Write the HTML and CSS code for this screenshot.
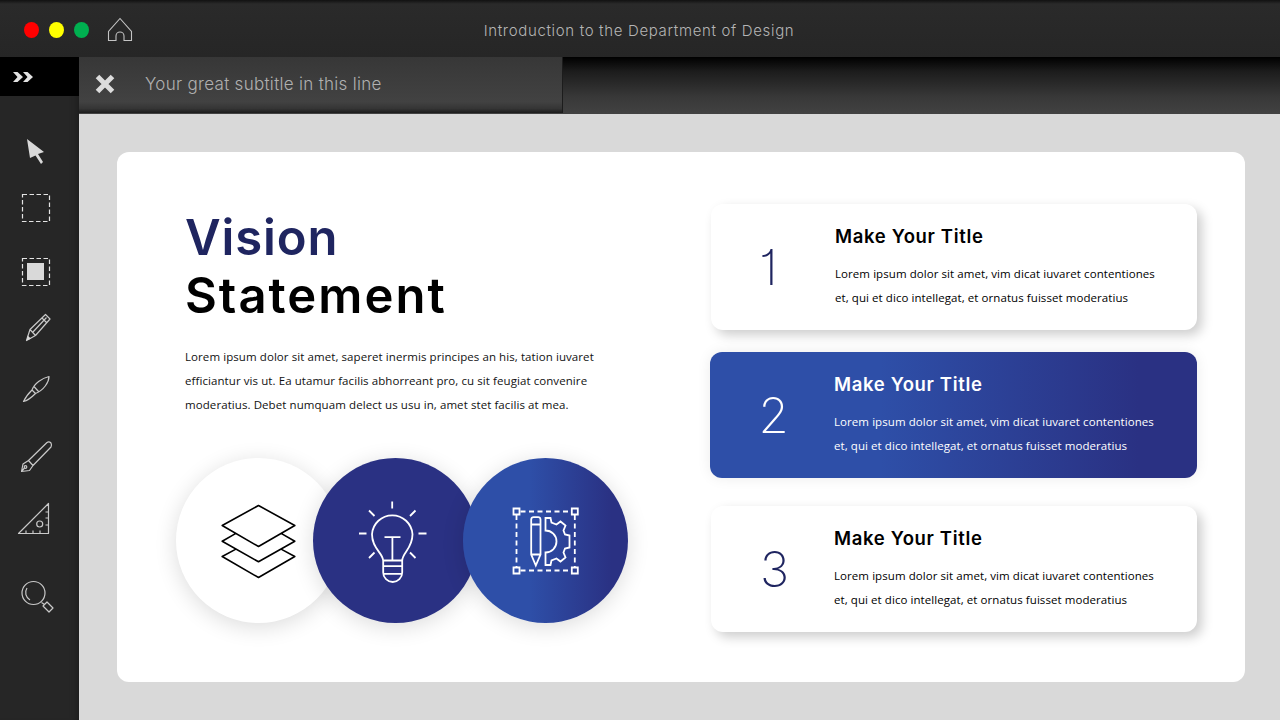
FILE: index.html
```html
<!DOCTYPE html>
<html lang="en">
<head>
<meta charset="utf-8">
<title>Vision Statement</title>
<link rel="stylesheet" href="styles.css">
</head>
<body>
<header class="topbar">
  <div class="window-controls">
    <span class="dot dot-red"></span>
    <span class="dot dot-yellow"></span>
    <span class="dot dot-green"></span>
    <svg class="home" viewBox="106 16 28 27"><path d="M108.500 40.500V31.500L120 18.500L131.500 31.500V40.500H124V36A4 4 0 0 0 116 36V40.500Z"/></svg>
  </div>
  <div class="doc-title">Introduction to the Department of Design</div>
</header>
<div class="workspace">
  <aside class="sidebar">
    <div class="expand">
      <svg class="chevrons" viewBox="0 0 20 10"><path d="M0 0H4.500L10 5L4.500 10H0L4.500 5Z"/><path d="M10 0H14.500L20 5L14.500 10H10L14.500 5Z"/></svg>
    </div>
    <div class="tools">
      <svg class="tool tool-arrow" viewBox="16 134 40 34"><polygon class="solid" points="27,139 44,152 38,154 43,162 41,164 35.500,155.500 30,158"/></svg>
      <svg class="tool tool-select" viewBox="16 190 40 36"><rect class="dash" x="22.500" y="194.500" width="27" height="27"/></svg>
      <svg class="tool tool-fill" viewBox="16 254 40 36"><rect class="dash" x="22.500" y="258.500" width="27" height="27"/><rect class="solid" x="27" y="263" width="17" height="17"/></svg>
      <svg class="tool tool-pencil" viewBox="16 310 40 36"><path class="line" d="M26.500 340.500L30 329.500L45.500 314.500L50 319L35.500 335.500ZM30 329.500L35.500 335.500M42 318L47 323M32.500 332.500L46.500 317.500"/><path class="solid" d="M26.500 340.500L27.700 335.500L31 338.800Z"/></svg>
      <svg class="tool tool-brush" viewBox="16 372 40 34"><path class="line" d="M23.500 401.500C26 396 30 392 32 390L35.500 393.500C32 397 28 400.500 23.500 401.500ZM32 390C34 384 42 378 49 376.500C49 382 44 390 35.500 393.500M33.500 386L38.500 391.500"/></svg>
      <svg class="tool tool-pen" viewBox="16 438 40 38"><path class="line" d="M47 442.500Q49 441 51 443Q52 445 51 447L33 465.500L28.500 460.500ZM21.500 471.500L23 464L28.500 460.500L33 465.500L29.500 470.500ZM21.500 471.500L24.500 468"/><circle class="line" cx="25.500" cy="467" r="1.300"/></svg>
      <svg class="tool tool-triangle" viewBox="16 499 40 38"><path class="line" d="M18.500 533.500L48.500 503.500V533.500ZM48.500 512H45.500M48.500 518H45.500M48.500 525H45.500M26 533.500V530.500M33 533.500V530.500M40 533.500V530.500"/><circle class="line" cx="39.700" cy="524" r="3"/></svg>
      <svg class="tool tool-search" viewBox="16 578 40 38"><circle class="line" cx="33.500" cy="593" r="11.500"/><path class="line" d="M27 588A8.500 8.500 0 0 0 30 600M41.500 602.500L44.500 604.500M43 606L47 602L53 608L49 612Z"/></svg>
    </div>
  </aside>
  <main class="main">
    <div class="subbar">
      <div class="subtitle-panel">
        <svg class="close" viewBox="0 0 20 20"><path d="M2.500 2.500L17.500 17.500M17.500 2.500L2.500 17.500"/></svg>
        <span class="subtitle">Your great subtitle in this line</span>
      </div>
    </div>
    <div class="stage">
      <section class="slide">
        <div class="intro">
          <h1 class="heading"><span class="heading-accent">Vision</span><br>Statement</h1>
          <p class="lead">Lorem ipsum dolor sit amet, saperet inermis principes an his, tation iuvaret<br>efficiantur vis ut. Ea utamur facilis abhorreant pro, cu sit feugiat convenire<br>moderatius. Debet numquam delect us usu in, amet stet facilis at mea.</p>
          <div class="circles">
            <div class="circle circle-white">
              <svg class="circle-icon" viewBox="216.500 498.500 84 84"><path class="ink-dark" d="M221.700 525L258 505L294.300 525L258 546ZM235.400 532.900L221.700 540.700L258 561.300L294.300 540.700L280.600 532.900M235.400 548.600L221.700 556L258 577L294.300 556L280.600 548.600"/></svg>
            </div>
            <div class="circle circle-navy">
              <svg class="circle-icon" viewBox="353.500 498.500 84 84"><path class="ink-light" d="M382.700 560C382 552 371.500 548 371.500 533.700A20.300 20.300 0 0 1 412 533.700C412 548 402 552 401.700 560ZM382.700 560V572A9.500 9.500 0 0 0 401.700 572V560M382.700 565.700H401.700M382.700 573.300H401.700M384 536.700H400M391.900 536.700V560M391.700 501V508M358.500 533H366M418 533H426M368.500 510L374 515.500M415 510L409.500 515.500M368.500 557.500L374 552M415 557.500L409.500 552"/></svg>
            </div>
            <div class="circle circle-blue">
              <svg class="circle-icon" viewBox="503.500 498.500 84 84"><path class="ink-light ink-dash" d="M520 511H571M516 514.500V567M520 570H571M574.300 514.500V567"/><path class="ink-light" d="M513 508H519V514H513ZM571.300 508H577.300V514H571.300ZM513 567H519V573H513ZM571.300 567H577.300V573H571.300Z"/><path class="ink-light" d="M530.700 554V519A2.500 2.500 0 0 1 533.200 516.700H537.500A2.500 2.500 0 0 1 540 519V554L535.300 565ZM530.700 524H540M530.700 554H540M545 517.500H550L551 522L556 524L560 521L565 525L563 530L564.500 534L569 535V547L564.500 548L563 552L565 557L560 561L556 558L551 560L550 564.500H545V552A11 11 0 0 0 545 530Z"/></svg>
            </div>
          </div>
        </div>
        <div class="cards">
          <article class="card card-first">
            <div class="card-number">1</div>
            <div class="card-body">
              <h2 class="card-title">Make Your Title</h2>
              <p class="card-text">Lorem ipsum dolor sit amet, vim dicat iuvaret contentiones<br>et, qui et dico intellegat, et ornatus fuisset moderatius</p>
            </div>
          </article>
          <article class="card card-active">
            <div class="card-number">2</div>
            <div class="card-body">
              <h2 class="card-title">Make Your Title</h2>
              <p class="card-text">Lorem ipsum dolor sit amet, vim dicat iuvaret contentiones<br>et, qui et dico intellegat, et ornatus fuisset moderatius</p>
            </div>
          </article>
          <article class="card card-last">
            <div class="card-number">3</div>
            <div class="card-body">
              <h2 class="card-title">Make Your Title</h2>
              <p class="card-text">Lorem ipsum dolor sit amet, vim dicat iuvaret contentiones<br>et, qui et dico intellegat, et ornatus fuisset moderatius</p>
            </div>
          </article>
        </div>
      </section>
    </div>
  </main>
</div>
</body>
</html>
```
FILE: styles.css
```css
* { box-sizing: border-box; }
html, body { margin: 0; padding: 0; }
body {
  width: 1280px;
  height: 720px;
  overflow: hidden;
  display: flex;
  flex-direction: column;
  background: #262626;
  font-family: Inter, "Liberation Sans", sans-serif;
}

/* Top bar */
.topbar {
  height: 57px;
  flex: none;
  display: grid;
  grid-template-columns: 1fr auto 1fr;
  align-items: center;
  padding: 2px 0 0;
  background: linear-gradient(#111 0, #2a2a2a 4px, #262626 100%);
}
.window-controls { display: flex; align-items: center; padding-left: 24px; }
.dot { width: 15px; height: 16px; border-radius: 50%; margin-right: 10px; }
.dot-red { background: #ff0000; }
.dot-yellow { background: #ffff00; }
.dot-green { background: #00b050; }
.home { width: 28px; height: 27px; margin-left: 7px; fill: none; stroke: #c4c4c4; stroke-width: 1.100; }
.doc-title { color: #b4b4b4; font-size: 15px; font-weight: 300; letter-spacing: .66px; padding: 0 2px 0 0; margin-top: 1px; }

/* Workspace */
.workspace { flex: 1; display: flex; min-height: 0; }
.sidebar { width: 79px; flex: none; background: #262626; box-shadow: inset -8px 0 8px -8px #161616; }
.expand { height: 39px; background: #000; display: flex; align-items: center; padding-left: 13px; }
.chevrons { width: 20px; height: 10px; margin-top: 1px; fill: #e2e2e2; }
.tools { display: flex; flex-direction: column; padding-left: 16px; }
.tool { display: block; width: 40px; flex: none; }
.tool-arrow { height: 34px; margin-top: 38px; }
.tool-select { height: 36px; margin-top: 22px; }
.tool-fill { height: 36px; margin-top: 28px; }
.tool-pencil { height: 36px; margin-top: 20px; }
.tool-brush { height: 34px; margin-top: 26px; }
.tool-pen { height: 38px; margin-top: 32px; }
.tool-triangle { height: 38px; margin-top: 23px; }
.tool-search { height: 38px; margin-top: 41px; }
.solid { fill: #d9d9d9; stroke: none; }
.line { fill: none; stroke: #c9c9c9; stroke-width: 1.200; stroke-linejoin: round; }
.dash { fill: none; stroke: #e4e4e4; stroke-width: 1.200; stroke-dasharray: 4.500 2.500; }

.main { flex: 1; display: flex; flex-direction: column; min-width: 0; }
.subbar {
  height: 57px;
  flex: none;
  background: linear-gradient(#000 0, #1c1c1c 25%, #383838 70%, #424242 100%);
}
.subtitle-panel {
  width: 484px;
  height: 56px;
  display: flex;
  align-items: center;
  padding: 0 0 3px 16px;
  background: linear-gradient(#373737 0, #424242 80%, #353535 92%, #1c1c1c 100%);
  border-right: 1px solid #1c1c1c;
}
.close { width: 20px; height: 20px; flex: none; fill: none; stroke: #dcdcdc; stroke-width: 5px; }
.subtitle { margin-left: 30px; color: #b0b0b0; font-size: 17px; font-weight: 300; letter-spacing: .3px; }

/* Slide */
.stage { flex: 1; background: #d9d9d9; padding: 38px 35px 38px 38px; min-height: 0; }
.slide { height: 100%; background: #fff; border-radius: 12px; display: flex; }
.intro { width: 594px; flex: none; padding: 57px 0 0 68px; }
.heading { margin: 0; color: #000; font-size: 49px; line-height: 58px; font-weight: 600; letter-spacing: 2px; }
.heading-accent { color: #1f2560; letter-spacing: .9px; }
.lead { margin: 20px 0 0; color: #111; font-family: "Open Sans", sans-serif; font-size: 11.500px; line-height: 24px; letter-spacing: .08px; }
.circles { display: flex; margin: 41px 0 0 -9px; }
.circle { width: 165px; height: 165px; flex: none; border-radius: 50%; display: flex; align-items: center; justify-content: center; box-shadow: 0 4px 22px rgba(0,0,0,.14); }
.circle-white { background: #fff; }
.circle-navy { background: #2a3183; margin-left: -28px; }
.circle-blue { background: linear-gradient(90deg, #2e4fa8 0, #2e4fa8 40%, #2a3183 90%); margin-left: -15px; }
.circle-icon { width: 84px; height: 84px; }
.ink-dark { fill: none; stroke: #000; stroke-width: 1.600; stroke-linejoin: round; }
.ink-light { fill: none; stroke: #fff; stroke-width: 1.800; }
.ink-dash { stroke-dasharray: 5 3.500; }

/* Cards */
.cards { width: 486px; flex: none; padding-top: 52px; display: flex; flex-direction: column; }
.card { height: 126px; border-radius: 12px; background: #fff; display: flex; box-shadow: 5px 5px 12px rgba(0,0,0,.2); color: #000; }
.card-active { margin: 22px 0 28px -1px; background: linear-gradient(90deg, #2e4fa8 0, #2e4fa8 35%, #2a3183 88%); color: #fff; box-shadow: 0 0 14px rgba(0,0,0,.08); }
.card-number { width: 124px; flex: none; padding: 35px 0 0 3px; text-align: center; color: #1f2560; font-size: 49px; line-height: 57px; font-weight: 200; font-feature-settings: "cv01"; }
.card-first .card-number { padding-left: 0; padding-right: 9px; }
.card-active .card-number { color: #fff; }
.card-body { flex: 1; padding-top: 20px; }
.card-title { margin: 0; font-size: 18.500px; line-height: 24px; font-weight: 600; letter-spacing: .65px; }
.card-text { margin: 14px 0 0; font-family: "Open Sans", sans-serif; font-size: 11.500px; line-height: 24px; letter-spacing: .07px; }
.card-last .card-body { margin-left: -1px; }
```
